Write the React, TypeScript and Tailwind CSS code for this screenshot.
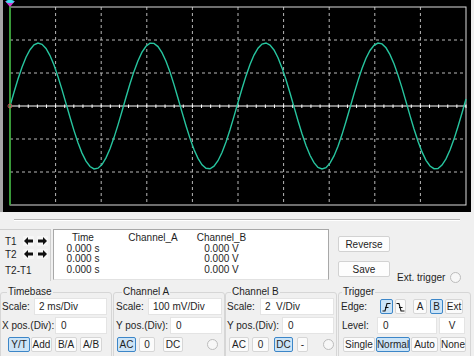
import React from "react";

const GRID_L = 10;
const GRID_R = 466;
const GRID_T = 7;
const GRID_B = 205;
const DIV_X = (GRID_R - GRID_L) / 10;
const DIV_Y = (GRID_B - GRID_T) / 6;
const MID = GRID_T + DIV_Y * 3;

function wavePoints() {
  const pts: string[] = [];
  for (let x = GRID_L; x <= GRID_R; x += 4) {
    const y = MID - 63 * Math.sin((2 * Math.PI * (x - GRID_L)) / 113.5);
    pts.push(`${x},${y.toFixed(1)}`);
  }
  return pts.join(" ");
}

function Scope() {
  const vx = Array.from({ length: 9 }, (_, i) => GRID_L + DIV_X * (i + 1));
  const hy = [1, 2, 4, 5].map((j) => GRID_T + DIV_Y * j);
  const ticks = Array.from({ length: 51 }, (_, i) => GRID_L + (DIV_X / 5) * i);

  return (
    <div className="flex h-[212px]">
      <div className="w-[3px] bg-[#a4a4a4]" />
      <div className="h-full w-[468px] bg-black">
        <svg width="468" height="212" viewBox="3 0 468 212">
          {/* grid */}
          {vx.map((x) => (
            <line key={x} x1={x} y1={GRID_T} x2={x} y2={GRID_B} stroke="#b8b8b8" strokeDasharray="3 3" />
          ))}
          {hy.map((y) => (
            <line key={y} x1={GRID_L} y1={y} x2={GRID_R} y2={y} stroke="#b8b8b8" strokeDasharray="3 3" />
          ))}
          <rect x={GRID_L} y={GRID_T} width={GRID_R - GRID_L} height={GRID_B - GRID_T} fill="none" stroke="#dcdcdc" />

          {/* zero line with ticks */}
          <line x1={GRID_L} y1={MID} x2={GRID_R} y2={MID} stroke="#ffffff" />
          {ticks.map((x) => (
            <line key={x} x1={x} y1={MID - 1.5} x2={x} y2={MID + 2} stroke="#ffffff" />
          ))}

          {/* signal */}
          <polyline points={wavePoints()} fill="none" stroke="#27c59f" strokeWidth="1.4" />

          {/* cursor */}
          <line x1={10} y1={0} x2={10} y2={GRID_B} stroke="#29a829" strokeWidth="1.5" />
          <circle cx={10} cy={MID} r={2} fill="none" stroke="#c25a5a" />
          <polygon points="5,1 15,1 10,7" fill="#d23cd2" />
          <ellipse cx={10} cy={1.5} rx={4} ry={1.6} fill="#3ee0f0" />
        </svg>
      </div>
    </div>
  );
}

function Arrow({ dir }: { dir: "left" | "right" }) {
  return (
    <div className="flex h-[10px] w-[11px] items-center justify-center rounded-[1px] bg-[#f7f7f7]">
      <svg width="9" height="8" viewBox="0 0 9 8">
        <path
          d={dir === "left" ? "M0 4 L4 0 V2.5 H9 V5.5 H4 V8 Z" : "M9 4 L5 0 V2.5 H0 V5.5 H5 V8 Z"}
          fill="#111"
        />
      </svg>
    </div>
  );
}

function Btn({ label, w, on, className = "" }: { label: React.ReactNode; w: string; on?: boolean; className?: string }) {
  return (
    <div
      className={`flex h-[15px] items-center justify-center rounded-[2px] border text-[10px] leading-none ${w} ${
        on ? "border-[#3c86c8] bg-[#cce4f7]" : "border-[#d6d6d6] bg-[#fbfbfb]"
      } ${className}`}
    >
      {label}
    </div>
  );
}

function Field({ value, w, className = "" }: { value: string; w: string; className?: string }) {
  return (
    <div
      className={`flex h-[17px] items-center whitespace-pre border border-[#e4e4e4] bg-white pl-[4px] ${w} ${className}`}
    >
      {value}
    </div>
  );
}

function Radio({ className = "" }: { className?: string }) {
  return <div className={`h-[11px] w-[11px] rounded-full border border-[#bcbcbc] bg-[#f7f7f7] ${className}`} />;
}

function RiseIcon() {
  return (
    <svg width="9" height="10" viewBox="0 0 9 10">
      <path d="M0.5 9 H3 L5 1.5 H8.5 M3 5.5 H6.5" fill="none" stroke="#111" strokeWidth="1.1" />
    </svg>
  );
}

function FallIcon() {
  return (
    <svg width="9" height="10" viewBox="0 0 9 10">
      <path d="M0.5 1.5 H3 L5 9 H8.5 M3 5.5 H6.5" fill="none" stroke="#111" strokeWidth="1.1" />
    </svg>
  );
}

function Readouts() {
  return (
    <div className="flex h-[58px]">
      {/* cursor controls */}
      <div className="mt-[1px] flex h-[52px] w-[51px] flex-col border-r border-t border-[#cfcfcf] pl-[5px] pt-[5px]">
        <div className="flex h-[12px] items-center gap-[3px]">
          <span className="w-[15px]">T1</span>
          <Arrow dir="left" />
          <Arrow dir="right" />
        </div>
        <div className="mt-[1px] flex h-[12px] items-center gap-[3px]">
          <span className="w-[15px]">T2</span>
          <Arrow dir="left" />
          <Arrow dir="right" />
        </div>
        <div className="mt-[4px] flex h-[12px] items-center">T2-T1</div>
      </div>

      {/* table */}
      <div className="ml-[2px] mt-[1px] flex h-[51px] w-[276px] border border-[#a8a8a8] border-b-[#e2e2e2] bg-white pt-[3px] leading-[10.5px]">
        <div className="flex w-[58px] flex-col items-center">
          <span>Time</span>
          <span>0.000 s</span>
          <span>0.000 s</span>
          <span>0.000 s</span>
        </div>
        <div className="flex w-[82px] flex-col items-center">
          <span>Channel_A</span>
        </div>
        <div className="flex w-[55px] flex-col items-center">
          <span>Channel_B</span>
          <span>0.000 V</span>
          <span>0.000 V</span>
          <span>0.000 V</span>
        </div>
      </div>

      <div className="ml-[9px] flex flex-col pt-[8px]">
        <div className="flex h-[16px] w-[52px] items-center justify-center rounded-[2px] border border-[#d2d2d2] bg-[#fdfdfd]">
          Reverse
        </div>
        <div className="mt-[9px] flex h-[16px] w-[52px] items-center justify-center rounded-[2px] border border-[#d2d2d2] bg-[#fdfdfd]">
          Save
        </div>
      </div>

      <div className="ml-[7px] mt-[43px] flex h-[12px] items-center">
        <span>Ext. trigger</span>
        <Radio className="ml-[5px]" />
      </div>
    </div>
  );
}

const fieldsetCls = "h-[74px] min-w-0 rounded-[3px] border border-[#d6d6d6]";
const legendCls = "px-[1px] leading-[12px]";

function Controls() {
  return (
    <div className="flex">
      {/* Timebase */}
      <fieldset className={`${fieldsetCls} w-[112px] pl-[1px]`}>
        <legend className={`${legendCls} ml-[5px]`}>Timebase</legend>
        <div className="flex h-[17px] items-center">
          <span className="w-[32px]">Scale:</span>
          <Field value="2 ms/Div" w="w-[73px]" />
        </div>
        <div className="mt-[2px] flex h-[17px] items-center">
          <span className="w-[53px]">X pos.(Div):</span>
          <Field value="0" w="w-[52px]" className="pl-[5px]" />
        </div>
        <div className="ml-[6px] mt-[3px] flex">
          <Btn label="Y/T" w="w-[22px]" on />
          <Btn label="Add" w="w-[21px]" className="ml-[1px]" />
          <Btn label="B/A" w="w-[22px]" className="ml-[3px]" />
          <Btn label="A/B" w="w-[22px]" className="ml-[3px]" />
        </div>
      </fieldset>

      {/* Channel A */}
      <fieldset className={`${fieldsetCls} ml-[1px] w-[112px] pl-[2px]`}>
        <legend className={`${legendCls} ml-[6px]`}>Channel A</legend>
        <div className="flex h-[17px] items-center">
          <span className="w-[32px]">Scale:</span>
          <Field value="100 mV/Div" w="w-[74px]" />
        </div>
        <div className="mt-[2px] flex h-[17px] items-center">
          <span className="w-[54px]">Y pos.(Div):</span>
          <Field value="0" w="w-[52px]" className="pl-[5px]" />
        </div>
        <div className="ml-[1px] mt-[3px] flex items-center">
          <Btn label="AC" w="w-[19px]" on />
          <Btn label="0" w="w-[16px]" className="ml-[3px]" />
          <Btn label="DC" w="w-[20px]" className="ml-[8px]" />
          <Radio className="ml-[24px]" />
        </div>
      </fieldset>

      {/* Channel B */}
      <fieldset className={`${fieldsetCls} w-[112px] pl-[1px]`}>
        <legend className={`${legendCls} ml-[4px]`}>Channel B</legend>
        <div className="flex h-[17px] items-center">
          <span className="w-[33px]">Scale:</span>
          <Field value="2  V/Div" w="w-[74px]" />
        </div>
        <div className="mt-[2px] flex h-[17px] items-center">
          <span className="w-[55px]">Y pos.(Div):</span>
          <Field value="0" w="w-[52px]" className="pl-[5px]" />
        </div>
        <div className="ml-[2px] mt-[3px] flex items-center">
          <Btn label="AC" w="w-[20px]" />
          <Btn label="0" w="w-[17px]" className="ml-[3px]" />
          <Btn label="DC" w="w-[19px]" className="ml-[5px]" on />
          <Btn label="-" w="w-[11px]" className="ml-[4px]" />
          <Radio className="ml-[15px]" />
        </div>
      </fieldset>

      {/* Trigger */}
      <fieldset className={`${fieldsetCls} ml-[1px] w-[133px] pl-[2px]`}>
        <legend className={`${legendCls} ml-[1px]`}>Trigger</legend>
        <div className="flex h-[17px] items-center">
          <span className="w-[39px]">Edge:</span>
          <Btn label={<RiseIcon />} w="w-[13px]" on />
          <Btn label={<FallIcon />} w="w-[11px]" className="ml-[2px]" />
          <Btn label="A" w="w-[14px]" className="ml-[7px]" />
          <Btn label="B" w="w-[13px]" className="ml-[3px]" on />
          <Btn label="Ext" w="w-[18px]" className="ml-[2px]" />
        </div>
        <div className="mt-[2px] flex h-[17px] items-center">
          <span className="ml-[1px] w-[35px]">Level:</span>
          <Field value="0" w="w-[60px]" className="pl-[5px]" />
          <div className="ml-[2px] flex h-[17px] w-[26px] items-center justify-center border border-[#e4e4e4] bg-white">
            V
          </div>
        </div>
        <div className="ml-[2px] mt-[3px] flex">
          <Btn label="Single" w="w-[32px]" />
          <Btn label="Normal" w="w-[34px]" className="ml-[1px]" on />
          <Btn label="Auto" w="w-[27px]" className="ml-[1px]" />
          <Btn label="None" w="w-[26px]" className="ml-[2px]" />
        </div>
      </fieldset>
    </div>
  );
}

export default function App() {
  return (
    <div className="h-[356px] w-[474px] overflow-hidden bg-[#f0f0f0] font-['Liberation_Sans',Arial,sans-serif] text-[10px] text-[#1e1e1e]">
      <Scope />
      {/* position slider */}
      <div className="h-[16px] pt-[7px]">
        <div className="ml-[14px] h-[2px] w-[446px] border-b border-t border-b-white border-t-[#b4b4b4]" />
      </div>
      <Readouts />
      <Controls />
    </div>
  );
}
